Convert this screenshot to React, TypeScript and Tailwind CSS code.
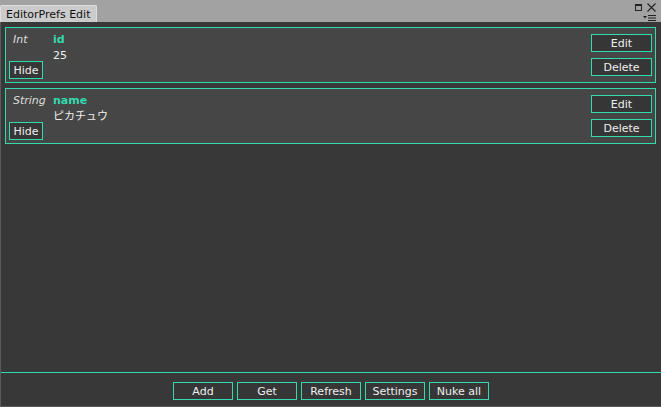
const teal = 'border-[#34d9ac]';

type Pref = { type: string; key: string; value: string };

const prefs: Pref[] = [
  { type: 'Int', key: 'id', value: '25' },
  { type: 'String', key: 'name', value: 'ピカチュウ' },
];

const Btn = ({ label, className }: { label: string; className?: string }) => (
  <button
    className={`flex items-center justify-center border ${teal} bg-[#363636] text-[11px] leading-none text-[#eeeeee] ${className ?? ''}`}
  >
    {label}
  </button>
);

const PrefRow = ({ pref }: { pref: Pref }) => (
  <div className={`flex h-[56px] border ${teal} bg-[#464646] pl-[3px] pr-[3px]`}>
    <div className="flex w-[44px] flex-col justify-between pt-[4px] pb-[3px]">
      <span className="pl-[4px] text-[11px] italic leading-[15px] text-[#dddddd]">{pref.type}</span>
      <Btn label="Hide" className="h-[18px] w-[34px]" />
    </div>
    <div className="flex flex-1 flex-col pt-[4px]">
      <span className="text-[11px] font-bold leading-[15px] text-[#34d9ac]">{pref.key}</span>
      <span className="mt-[1px] text-[11px] leading-[16px] text-[#eeeeee]">{pref.value}</span>
    </div>
    <div className="flex flex-col gap-[6px] pt-[6px]">
      <Btn label="Edit" className="h-[18px] w-[61px]" />
      <Btn label="Delete" className="h-[18px] w-[61px]" />
    </div>
  </div>
);

export default function App() {
  return (
    <div
      className="flex h-[407px] w-[661px] flex-col bg-[#a2a2a2]"
      style={{ fontFamily: '"DejaVu Sans", "Noto Sans CJK JP", sans-serif' }}
    >
      {/* tab strip */}
      <div className="relative flex h-[22px] items-end">
        <div className="flex h-[17px] w-[97px] items-center rounded-t-[2px] border border-b-0 border-[#dedede] bg-[#cbcbcb] pl-[5px] text-[11px] leading-none text-[#111111]">
          EditorPrefs Edit
        </div>
        <div className="absolute right-[5px] top-[3px] flex items-start gap-[5px]">
          <svg width="7" height="7" viewBox="0 0 7 7" className="mt-[1px]">
            <rect x="0.5" y="0.5" width="6" height="6" fill="none" stroke="#222" />
            <rect x="0" y="0" width="7" height="2" fill="#222" />
          </svg>
          <svg width="9" height="9" viewBox="0 0 9 9">
            <path d="M0.5 0.5 L8.5 8.5 M8.5 0.5 L0.5 8.5" stroke="#222" strokeWidth="1.1" />
          </svg>
        </div>
        <svg width="13" height="6" viewBox="0 0 13 6" className="absolute right-[5px] top-[15px]">
          <path d="M0 1 L4 1 L2 3.5 Z" fill="#222" />
          <rect x="5" y="0" width="8" height="1" fill="#222" />
          <rect x="5" y="2.5" width="8" height="1" fill="#222" />
          <rect x="5" y="5" width="8" height="1" fill="#222" />
        </svg>
      </div>

      {/* window body */}
      <div className="flex flex-1 flex-col border-b border-l border-[#5a5a5a] bg-[#383838]">
        <div className="flex flex-1 flex-col gap-[5px] px-[4px] pt-[5px] pr-[5px]">
          {prefs.map((p) => (
            <PrefRow key={p.key} pref={p} />
          ))}
        </div>
        <div className={`flex h-[34px] items-start justify-center gap-[4px] border-t ${teal} pt-[9px]`}>
          {['Add', 'Get', 'Refresh', 'Settings', 'Nuke all'].map((l) => (
            <Btn key={l} label={l} className="h-[18px] w-[60px]" />
          ))}
        </div>
      </div>
    </div>
  );
}
